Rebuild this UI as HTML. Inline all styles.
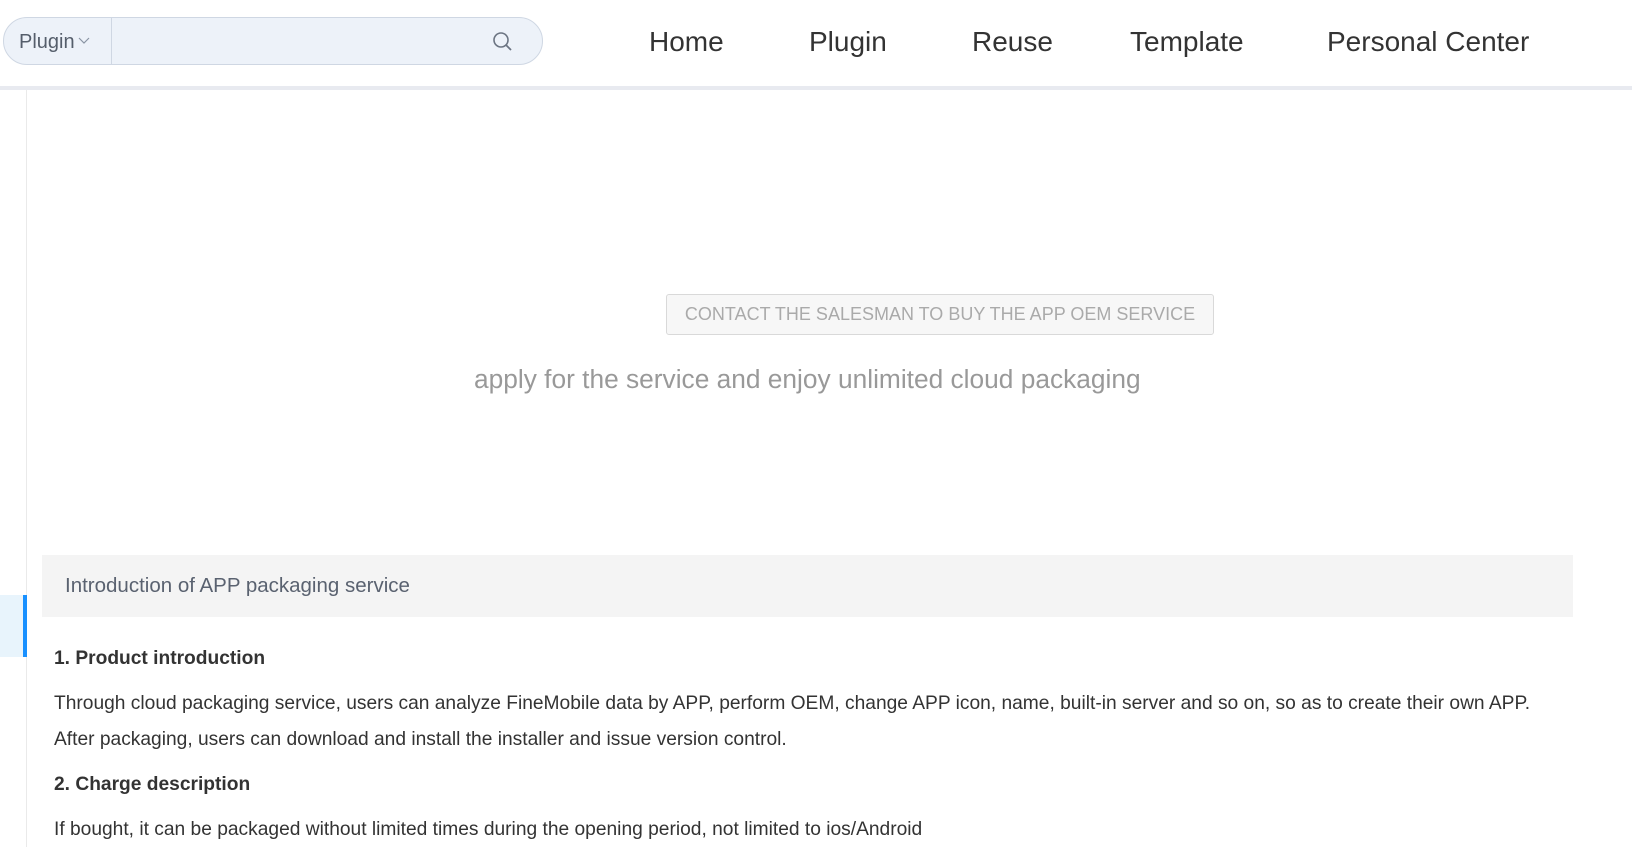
<!DOCTYPE html>
<html><head><meta charset="utf-8"><style>
*{margin:0;padding:0;box-sizing:border-box}
body{width:1632px;height:847px;overflow:hidden;background:#fff;font-family:"Liberation Sans","Noto Sans CJK SC",sans-serif;position:relative}
.hdr{position:absolute;left:0;top:0;width:1632px;height:90px;background:#fff;border-bottom:4px solid #e8eaf0}
.search{position:absolute;left:3px;top:17px;width:540px;height:48px;border:1px solid #cfd7e3;border-radius:24px;background:#edf2f9}
.search .sel{position:absolute;left:15px;top:13px;font-size:20px;color:#555e6b}
.search .div{position:absolute;left:107px;top:0;width:1px;height:46px;background:#cfd7e3}
.nav{position:absolute;top:26px;font-size:28px;color:#333}
.side{position:absolute;left:26px;top:90px;width:1px;height:757px;background:#eaeaea}
.hl{position:absolute;left:0;top:595px;width:27px;height:62px;background:#e8f4fc;border-right:4px solid #1890ff}
.btn{position:absolute;left:666px;top:294px;width:548px;height:41px;border:1px solid #d9d9d9;border-radius:3px;background:#f7f7f7;color:#aaa;font-size:18px;text-align:center;line-height:39px}
.sub{position:absolute;left:474px;top:364px;font-size:26.3px;color:#999}
.band{position:absolute;left:42px;top:555px;width:1531px;height:62px;background:#f4f4f4}
.band span{position:absolute;left:23px;top:19px;font-size:20.5px;color:#5a6270}
.t{position:absolute;left:54px;font-size:19.2px;color:#333;white-space:nowrap}
.b{font-weight:bold}
</style></head><body>
<div class="hdr">
 <div class="search"><span class="sel">Plugin<svg width="12" height="8" style="margin-left:3px;vertical-align:3px"><path d="M1 1l5 5 5-5" fill="none" stroke="#8a94a3" stroke-width="1.2"/></svg></span><div class="div"></div>
 <svg style="position:absolute;left:488px;top:13px" width="22" height="22" viewBox="0 0 22 22"><circle cx="9" cy="9" r="7" fill="none" stroke="#6b7482" stroke-width="1.6"/><path d="M14 14l5 5" stroke="#6b7482" stroke-width="1.8"/></svg>
 </div>
 <div class="nav" style="left:649px">Home</div>
 <div class="nav" style="left:809px">Plugin</div>
 <div class="nav" style="left:972px">Reuse</div>
 <div class="nav" style="left:1130px">Template</div>
 <div class="nav" style="left:1327px">Personal Center</div>
</div>
<div class="side"></div>
<div class="hl"></div>
<div class="btn">CONTACT THE SALESMAN TO BUY THE APP OEM SERVICE</div>
<div class="sub">apply for the service and enjoy unlimited cloud packaging</div>
<div class="band"><span>Introduction of APP packaging service</span></div>
<div class="t b" style="top:648px">1. Product introduction</div>
<div class="t" style="top:693px">Through cloud packaging service, users can analyze FineMobile data by APP, perform OEM, change APP icon, name, built-in server and so on, so as to create their own APP.</div>
<div class="t" style="top:729px">After packaging, users can download and install the installer and issue version control.</div>
<div class="t b" style="top:774px">2. Charge description</div>
<div class="t" style="top:819px">If bought, it can be packaged without limited times during the opening period, not limited to ios/Android</div>
</body></html>
